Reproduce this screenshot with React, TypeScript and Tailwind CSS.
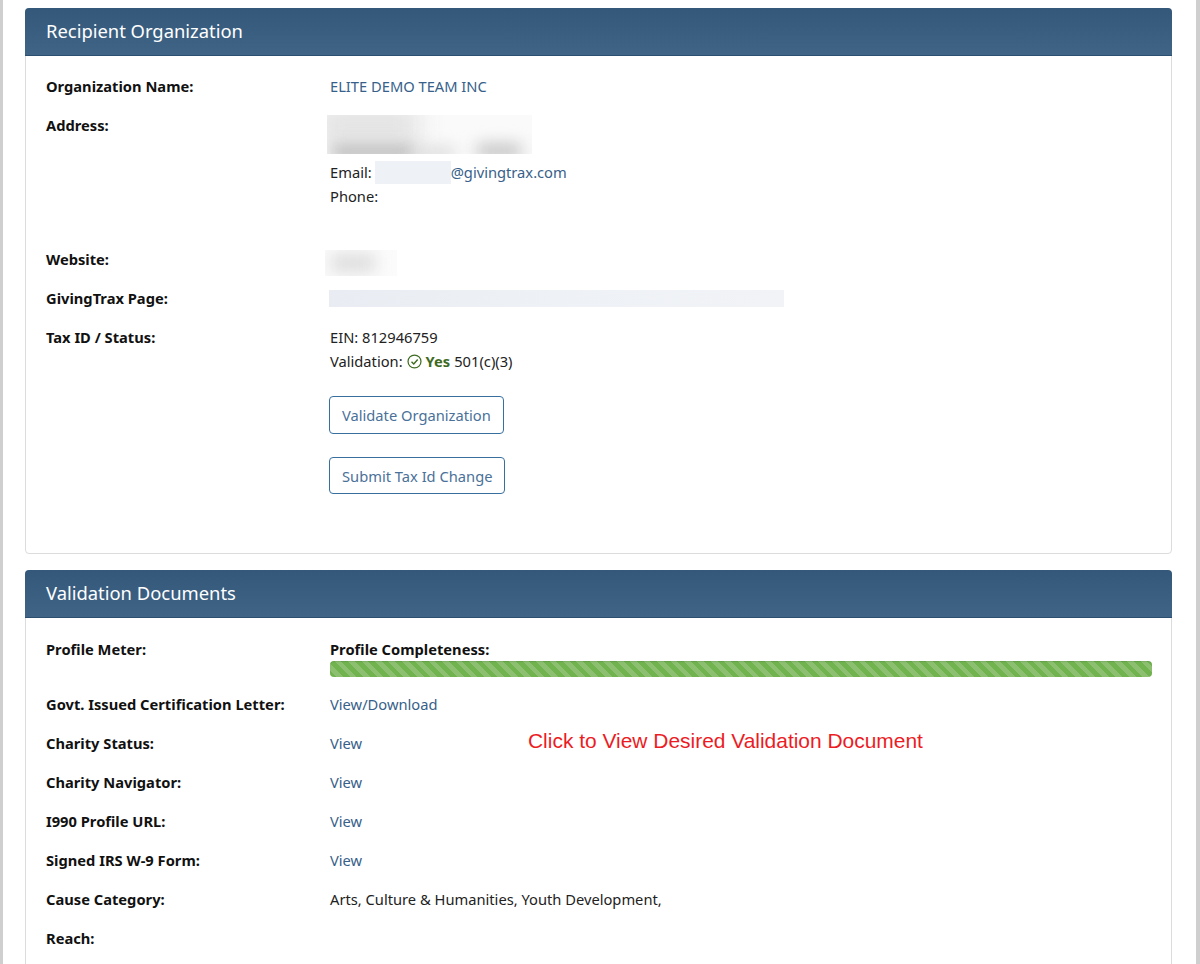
const font = { fontFamily: '"Noto Sans", "Open Sans", sans-serif' };

function Row({ label, children, className = "" }: { label: string; children?: React.ReactNode; className?: string }) {
  return (
    <div className={`flex ${className}`}>
      <div className="w-[284px] shrink-0 font-bold text-[#111]">{label}</div>
      <div className="min-w-0 flex-1">{children}</div>
    </div>
  );
}

function Card({ title, children, className = "" }: { title: string; children: React.ReactNode; className?: string }) {
  return (
    <section className={`rounded border border-[#dcdcdc] bg-white ${className}`}>
      <header className="-mx-px -mt-px flex h-[48px] items-center rounded-t border-b border-[#2c4f70] bg-gradient-to-b from-[#33587a] to-[#3f6486] px-[21px] pb-[2px] text-[18.4px] text-white">
        {title}
      </header>
      {children}
    </section>
  );
}

export default function App() {
  return (
    <div
      style={font}
      className="h-[964px] overflow-hidden border-x-[3px] border-r-4 border-x-[#cfcfcf] bg-white pl-[22px] pr-6 pt-2 text-[14.7px] leading-6 text-[#222]"
    >
      <Card title="Recipient Organization" className="h-[546px]">
        <div className="space-y-[15px] pl-5 pr-[19px] pt-[18px]">
          <Row label="Organization Name:">
            <a className="text-[#37618a]">ELITE DEMO TEAM INC</a>
          </Row>
          <Row label="Address:">
            <div className="relative h-[83px]">
              {/* redacted address smear */}
              <div className="absolute -left-[3px] top-[2px] h-[39px] w-[205px] overflow-hidden bg-[#fafafa]">
                <div className="absolute -left-2 -top-2 h-[36px] w-[100px] bg-[#e2e2e2] blur-md" />
                <div className="absolute left-[4px] top-[30px] h-[14px] w-[84px] bg-[#b4b4b4] blur-sm" />
                <div className="absolute left-[88px] top-[33px] h-[10px] w-[40px] bg-[#d4d4d4] blur-sm" />
                <div className="absolute left-[150px] top-[29px] h-[14px] w-[44px] bg-[#c0c0c0] blur-sm" />
              </div>
              <div className="absolute left-0 top-[47px] flex items-center">
                <span>Email:</span>
                <span className="ml-[3px] h-[23px] w-[76px] bg-[#eef1f6]" />
                <a className="text-[#37618a]">@givingtrax.com</a>
              </div>
              <div className="absolute left-0 top-[71px]">Phone:</div>
            </div>
            <div className="h-[36px]" />
          </Row>
          <Row label="Website:">
            <div className="relative h-6">
              <div className="absolute -left-[5px] top-[3px] h-[26px] w-[72px] overflow-hidden bg-[#fbfbfb]">
                <div className="ml-[6px] mt-[4px] h-[18px] w-[44px] bg-[#dcdcdc] blur-sm" />
              </div>
            </div>
          </Row>
          <Row label="GivingTrax Page:">
            <div className="mt-1 -ml-[1px] h-[17px] w-[455px] bg-gradient-to-r from-[#e9edf3] via-[#eef1f5] to-[#f1f3f7]" />
          </Row>
          <Row label="Tax ID / Status:">
            <div>EIN: 812946759</div>
            <div className="flex items-center">
              Validation:
              <svg viewBox="0 0 16 16" className="mx-[4px] h-[15px] w-[15px] text-[#3e6b1f]" fill="none" stroke="currentColor" strokeWidth="1.3">
                <circle cx="8" cy="8" r="6.9" />
                <path d="M4.8 8.2 7.2 10.6 11.4 5.8" strokeWidth="1.5" />
              </svg>
              <b className="mr-1 text-[#3e6b1f]">Yes</b> 501(c)(3)
            </div>
            <button className="-ml-px mt-[23px] block h-[38px] rounded border border-[#37709f] px-3 text-[#4a7199]">
              Validate Organization
            </button>
            <button className="-ml-px mt-[23px] block h-[37px] rounded border border-[#37709f] px-3 text-[#4a7199]">
              Submit Tax Id Change
            </button>
          </Row>
        </div>
      </Card>

      <Card title="Validation Documents" className="relative mt-4 h-[420px]">
        <div className="relative pl-5 pr-[19px] pt-[19px]">
          <Row label="Profile Meter:" className="mb-[15px] h-[40px]">
            <div className="font-bold text-[#111]">Profile Completeness:</div>
            <div className="h-4 rounded bg-[repeating-linear-gradient(45deg,#70b34f_0,#70b34f_4.75px,#8cc070_4.75px,#8cc070_9.5px)] shadow-[inset_0_1px_1px_rgba(0,0,0,0.1)]" />
          </Row>
          <div className="space-y-[15px]">
            <Row label="Govt. Issued Certification Letter:">
              <a className="text-[#37618a]">View/Download</a>
            </Row>
            <Row label="Charity Status:">
              <a className="text-[#37618a]">View</a>
            </Row>
            <Row label="Charity Navigator:">
              <a className="text-[#37618a]">View</a>
            </Row>
            <Row label="I990 Profile URL:">
              <a className="text-[#37618a]">View</a>
            </Row>
            <Row label="Signed IRS W-9 Form:">
              <a className="text-[#37618a]">View</a>
            </Row>
            <Row label="Cause Category:">Arts, Culture &amp; Humanities, Youth Development,</Row>
            <Row label="Reach:" />
          </div>
          <div className="absolute left-[502px] top-[111px] font-['Liberation_Sans',sans-serif] text-[20.95px] text-[#ec1c24]">
            Click to View Desired Validation Document
          </div>
        </div>
      </Card>
    </div>
  );
}
